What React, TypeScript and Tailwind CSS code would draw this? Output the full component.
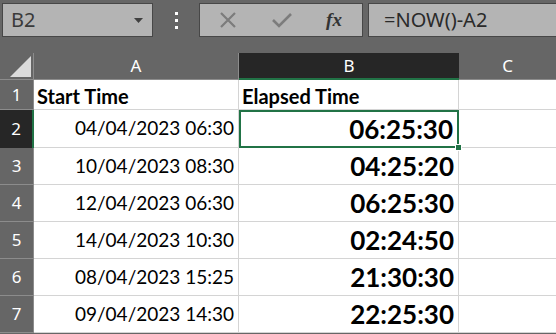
import React from "react";

const rows = [
  { n: 2, start: "04/04/2023 06:30", elapsed: "06:25:30" },
  { n: 3, start: "10/04/2023 08:30", elapsed: "04:25:20" },
  { n: 4, start: "12/04/2023 06:30", elapsed: "06:25:30" },
  { n: 5, start: "14/04/2023 10:30", elapsed: "02:24:50" },
  { n: 6, start: "08/04/2023 15:25", elapsed: "21:30:30" },
  { n: 7, start: "09/04/2023 14:30", elapsed: "22:25:30" },
];

const ui = { fontFamily: '"Noto Sans", "Open Sans", sans-serif' };
const cell = { fontFamily: 'Lato, "Noto Sans", sans-serif' };

const App: React.FC = () => {
  return (
    <div className="w-[556px] h-[334px] overflow-hidden bg-[#666666] flex flex-col" style={ui}>
      {/* formula bar */}
      <div className="h-[53px] flex items-start pt-[3px] pl-[2px] shrink-0">
        <div className="w-[151px] h-[34px] bg-[#b4b4b4] border border-[#474747] flex items-center justify-between pl-[8px] pr-[9px]">
          <span className="text-[20px] text-[#3a3a3a]">B2</span>
          <svg width="9" height="5" viewBox="0 0 9 5">
            <path d="M0 0 L9 0 L4.5 5 Z" fill="#404040" />
          </svg>
        </div>
        <div className="w-[46px] h-[34px] flex flex-col items-center justify-center gap-[4px]">
          <div className="w-[3px] h-[3px] bg-white" />
          <div className="w-[3px] h-[3px] bg-white" />
          <div className="w-[3px] h-[3px] bg-white" />
        </div>
        <div className="w-[164px] h-[34px] bg-[#b4b4b4] border border-[#474747] flex items-center">
          <div className="w-[56px] flex justify-center">
            <svg width="18" height="18" viewBox="0 0 18 18">
              <path d="M2 2 L16 16 M16 2 L2 16" stroke="#7c7c7c" strokeWidth="2.2" />
            </svg>
          </div>
          <div className="w-[52px] flex justify-center">
            <svg width="20" height="16" viewBox="0 0 20 16">
              <path d="M1 8 L7 14 L19 2" stroke="#7c7c7c" strokeWidth="2.6" fill="none" />
            </svg>
          </div>
          <div className="w-[52px] flex justify-center">
            <span className="text-[19px] italic font-bold text-[#333]" style={{ fontFamily: '"Liberation Serif", serif' }}>
              fx
            </span>
          </div>
        </div>
        <div className="ml-[5px] flex-1 h-[34px] bg-[#b4b4b4] border border-[#474747] border-r-0 flex items-center pl-[15px]">
          <span className="text-[20px] text-[#2a2a2a]">=NOW()-A2</span>
        </div>
      </div>

      {/* grid */}
      <div className="grid grid-cols-[34px_205px_220px_97px] grid-rows-[27px_30px_38px_37px_37px_37px_37px_37px] bg-white">
        {/* column header row */}
        <div className="bg-[#666666] border-r border-b border-[#8c8c8c] relative">
          <svg className="absolute left-[10px] top-[3px]" width="21" height="21" viewBox="0 0 21 21">
            <path d="M21 0 L21 21 L0 21 Z" fill="#dcdcdc" />
          </svg>
        </div>
        <div className="bg-[#666666] border-r border-b border-[#8c8c8c] flex items-center justify-center text-[17px] text-white">A</div>
        <div className="bg-[#262626] border-b-2 border-[#217346] flex items-center justify-center text-[17px] text-white">B</div>
        <div className="bg-[#666666] border-b border-[#8c8c8c] flex items-center justify-center text-[17px] text-white">C</div>

        {/* row 1 */}
        <div className="bg-[#666666] border-r border-b border-[#8c8c8c] flex items-center justify-center text-[17px] text-white">1</div>
        <div className="border-r border-b border-[#d4d4d4] flex items-end pl-[3px] text-[20px] font-bold text-black leading-[26px]" style={cell}>
          Start Time
        </div>
        <div className="border-r border-b border-[#d4d4d4] flex items-end pl-[3px] text-[20px] font-bold text-black leading-[26px]" style={cell}>
          Elapsed Time
        </div>
        <div className="border-b border-[#d4d4d4]" />

        {rows.map((r) => {
          const active = r.n === 2;
          return (
            <React.Fragment key={r.n}>
              <div
                className={
                  active
                    ? "bg-[#262626] border-r-2 border-[#217346] flex items-center justify-center text-[17px] text-white"
                    : "bg-[#666666] border-r border-b border-[#8c8c8c] flex items-center justify-center text-[17px] text-white"
                }
              >
                {r.n}
              </div>
              <div className="border-r border-b border-[#d4d4d4] flex items-center justify-end pr-[4px] text-[19px] text-black" style={cell}>
                {r.start}
              </div>
              {active ? (
                <div className="relative border-2 border-[#217346] flex items-center justify-end pr-[4px] text-[26px] font-bold text-black" style={cell}>
                  {r.elapsed}
                  <div className="absolute right-[-5px] bottom-[-5px] w-[7px] h-[7px] bg-[#217346] border border-white" />
                </div>
              ) : (
                <div className="border-r border-b border-[#d4d4d4] flex items-center justify-end pr-[4px] text-[26px] font-bold text-black" style={cell}>
                  {r.elapsed}
                </div>
              )}
              <div className="border-b border-[#d4d4d4]" />
            </React.Fragment>
          );
        })}
      </div>
    </div>
  );
};

export default App;
